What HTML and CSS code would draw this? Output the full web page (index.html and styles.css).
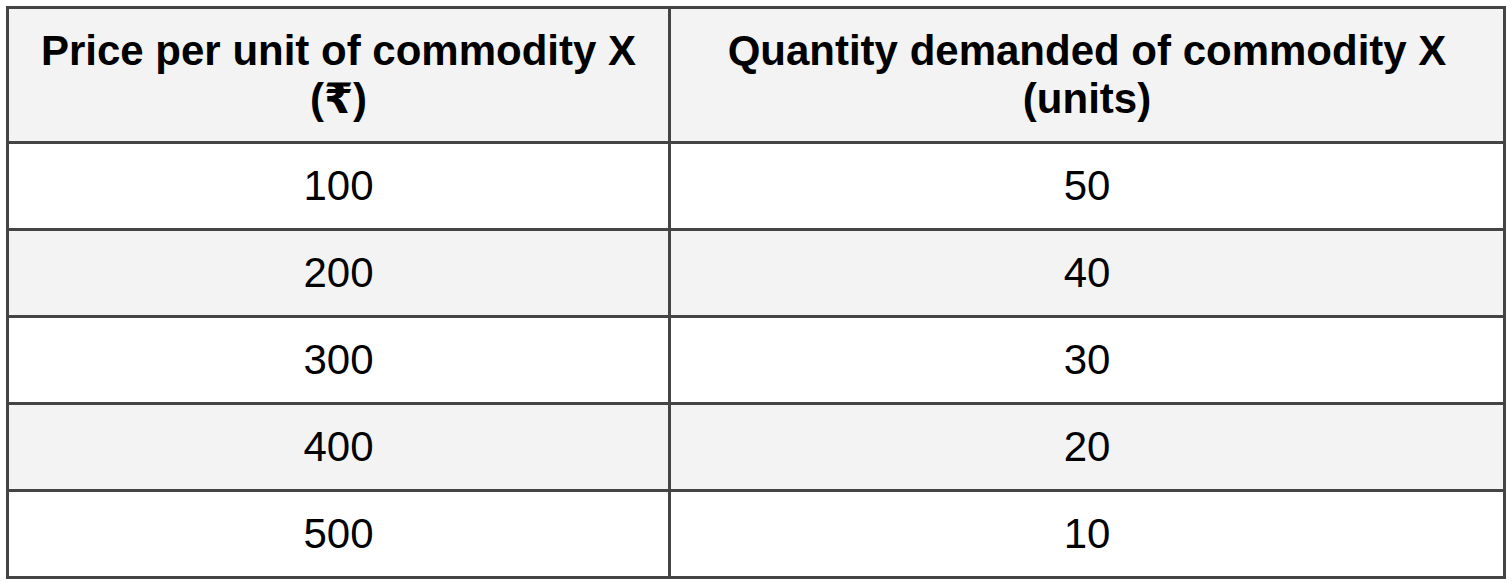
FILE: index.html
```html
<!DOCTYPE html>
<html lang="en">
<head>
<meta charset="utf-8">
<title>Demand schedule</title>
<link rel="stylesheet" href="styles.css">
</head>
<body>
<table class="schedule">
  <thead>
    <tr>
      <th class="col-price">Price per unit of commodity X<br>(₹)</th>
      <th class="col-qty">Quantity demanded of commodity X<br>(units)</th>
    </tr>
  </thead>
  <tbody>
    <tr><td class="col-price">100</td><td class="col-qty">50</td></tr>
    <tr><td class="col-price">200</td><td class="col-qty">40</td></tr>
    <tr><td class="col-price">300</td><td class="col-qty">30</td></tr>
    <tr><td class="col-price">400</td><td class="col-qty">20</td></tr>
    <tr><td class="col-price">500</td><td class="col-qty">10</td></tr>
  </tbody>
</table>
</body>
</html>
```
FILE: styles.css
```css
html, body {
  background: #ffffff;
}
body {
  margin: 6px;
  font-family: "Liberation Sans", Arial, "DejaVu Sans", sans-serif;
  color: #000000;
}
.schedule {
  border-collapse: separate;
  border-spacing: 0;
  border: 3px solid #444444;
  width: 1500px;
  table-layout: fixed;
  font-size: 42px;
  line-height: 48px;
}
.schedule th,
.schedule td {
  padding: 18px 4px;
  text-align: center;
  vertical-align: middle;
  border-top: 3px solid #444444;
}
.schedule thead th {
  border-top: 0;
  font-weight: bold;
  background: #f3f3f3;
}
.schedule tbody tr:nth-child(even) td {
  background: #f3f3f3;
}
.schedule .col-price {
  width: 662px;
  box-sizing: border-box;
  border-right: 3px solid #444444;
}
.schedule td {
  font-weight: normal;
}
```
